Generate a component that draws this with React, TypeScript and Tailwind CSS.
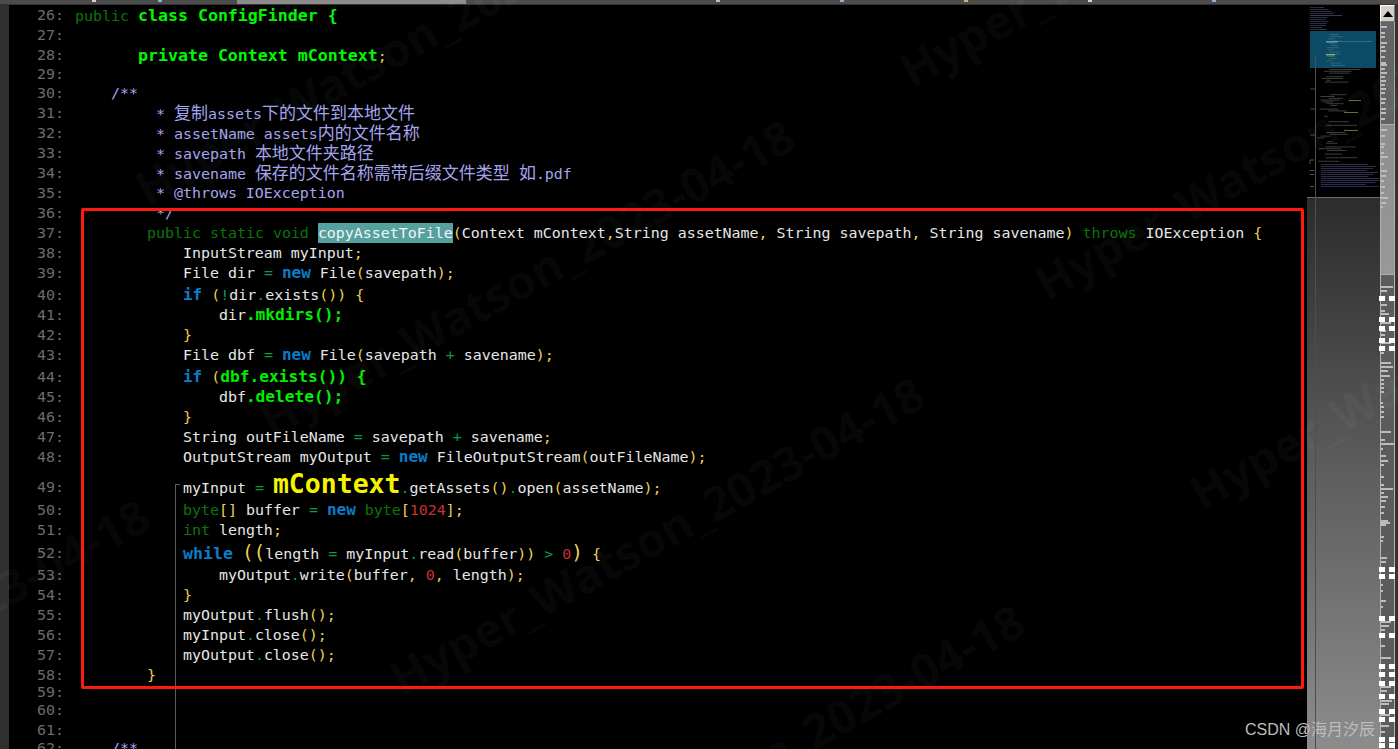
import React from "react";

const MONO = "font-['DejaVu_Sans_Mono','Liberation_Mono',monospace]";

const S: Record<string, string> = {
  t: "text-[#e6e6e6]",
  k: "text-[#0a760a]",
  g: "text-[#00f800] font-bold text-[16.6px]",
  m: "text-[#00ee00] font-bold text-[16.2px]",
  b: "text-[#0a7cc8] font-bold text-[16px]",
  w: "text-[#0a7cc8] font-bold text-[16.6px]",
  o: "text-[#0a9a4a]",
  y: "text-[#f0d050]",
  Y: "text-[#f0d050] text-[19.5px]",
  c: "text-[#a4a4ee]",
  z: "text-[#a4a4ee] text-[17px] font-['Noto_Sans_CJK_SC',sans-serif]",
  n: "text-[#c83030]",
  h: "inline-block h-[20px] bg-[#56a0a0] text-[#eef6f6]",
  M: "text-[#f4f400] font-bold text-[26.5px]",
};

type Tok = [string, string];

const KW = new Set(["public", "static", "void", "throws", "byte", "int"]);
const BL = new Set(["new", "if", "while"]);

function auto(src: string): Tok[] {
  const parts = src.match(/[A-Za-z_]+|\d+|\s+|./g) ?? [];
  return parts.map((p): Tok => {
    if (KW.has(p)) return [p, "k"];
    if (BL.has(p)) return [p, "b"];
    if (/^\d+$/.test(p)) return [p, "n"];
    if ("()[]{};,".includes(p)) return [p, "y"];
    if (".=+!>".includes(p)) return [p, "o"];
    return [p, "t"];
  });
}

const sp = (n: number) => " ".repeat(n);

const ROWS: { n: number; h: string; code?: string; toks: Tok[] }[] = [
  { n: 26, h: "h-[20px]", code: "mt-[1px]", toks: [["public ", "k"], ["class ConfigFinder {", "g"]] },
  { n: 27, h: "h-[20px]", toks: [] },
  { n: 28, h: "h-[19px]", code: "mt-[1px]", toks: [[sp(7), "t"], ["private Context mContext", "g"], [";", "y"]] },
  { n: 29, h: "h-[19px]", toks: [] },
  { n: 30, h: "h-[20px]", toks: [[sp(4) + "/**", "c"]] },
  { n: 31, h: "h-[20px]", code: "-mt-[1px]", toks: [[sp(9) + "* ", "c"], ["复制", "z"], ["assets", "c"], ["下的文件到本地文件", "z"]] },
  { n: 32, h: "h-[20px]", code: "-mt-[1px]", toks: [[sp(9) + "* assetName assets", "c"], ["内的文件名称", "z"]] },
  { n: 33, h: "h-[20px]", code: "-mt-[1px]", toks: [[sp(9) + "* savepath ", "c"], ["本地文件夹路径", "z"]] },
  { n: 34, h: "h-[20px]", code: "-mt-[1px]", toks: [[sp(9) + "* savename ", "c"], ["保存的文件名称需带后缀文件类型", "z"], [" ", "c"], ["如", "z"], [".pdf", "c"]] },
  { n: 35, h: "h-[20px]", toks: [[sp(9) + "* @throws IOException", "c"]] },
  { n: 36, h: "h-[20px]", toks: [[sp(9) + "*/", "c"]] },
  {
    n: 37,
    h: "h-[20px]",
    toks: [
      [sp(8), "t"],
      ...auto("public static void "),
      ["copyAssetToFile", "h"],
      ...auto("(Context mContext,String assetName, String savepath, String savename) throws IOException {"),
    ],
  },
  { n: 38, h: "h-[20px]", toks: auto(sp(12) + "InputStream myInput;") },
  { n: 39, h: "h-[22px]", toks: auto(sp(12) + "File dir = new File(savepath);") },
  { n: 40, h: "h-[20px]", toks: auto(sp(12) + "if (!dir.exists()) {") },
  { n: 41, h: "h-[20px]", toks: [[sp(16) + "dir", "t"], [".mkdirs();", "m"]] },
  { n: 42, h: "h-[20px]", toks: auto(sp(12) + "}") },
  { n: 43, h: "h-[22px]", toks: auto(sp(12) + "File dbf = new File(savepath + savename);") },
  { n: 44, h: "h-[20px]", toks: [[sp(12), "t"], ["if", "b"], [" ", "t"], ["(", "y"], ["dbf.exists()) {", "m"]] },
  { n: 45, h: "h-[20px]", toks: [[sp(16) + "dbf", "t"], [".delete();", "m"]] },
  { n: 46, h: "h-[20px]", toks: auto(sp(12) + "}") },
  { n: 47, h: "h-[20px]", toks: auto(sp(12) + "String outFileName = savepath + savename;") },
  { n: 48, h: "h-[30px]", toks: auto(sp(12) + "OutputStream myOutput = new FileOutputStream(outFileName);") },
  {
    n: 49,
    h: "h-[23px]",
    code: "-mt-[3px]",
    toks: [...auto(sp(12) + "myInput = "), ["mContext", "M"], ...auto(".getAssets().open(assetName);")],
  },
  { n: 50, h: "h-[20px]", toks: auto(sp(12) + "byte[] buffer = new byte[1024];") },
  { n: 51, h: "h-[23px]", toks: auto(sp(12) + "int length;") },
  {
    n: 52,
    h: "h-[22px]",
    toks: [
      [sp(12), "t"],
      ["while", "w"],
      [" ", "t"],
      ["((", "Y"],
      ...auto("length = myInput.read(buffer)) > 0"),
      [")", "Y"],
      ...auto(" {"),
    ],
  },
  { n: 53, h: "h-[20px]", toks: auto(sp(16) + "myOutput.write(buffer, 0, length);") },
  { n: 54, h: "h-[20px]", toks: auto(sp(12) + "}") },
  { n: 55, h: "h-[20px]", toks: auto(sp(12) + "myOutput.flush();") },
  { n: 56, h: "h-[20px]", toks: auto(sp(12) + "myInput.close();") },
  { n: 57, h: "h-[20px]", toks: auto(sp(12) + "myOutput.close();") },
  { n: 58, h: "h-[17px]", toks: auto(sp(8) + "}") },
  { n: 59, h: "h-[18px]", toks: [] },
  { n: 60, h: "h-[20px]", toks: [] },
  { n: 61, h: "h-[18px]", toks: [] },
  { n: 62, h: "h-[20px]", toks: [[sp(4) + "/**", "c"]] },
];

function Row({ n, h, code, toks }: { n: number; h: string; code?: string; toks: Tok[] }) {
  return (
    <div className={`flex ${h}`}>
      <div className="w-[66px] shrink-0 pl-[28px] text-[#6c6c6c] leading-[20px]">{n}:</div>
      <div className={`whitespace-pre leading-[20px] ${code ?? ""}`}>
        {toks.map(([text, kind], i) => (
          <span key={i} className={S[kind]}>
            {text}
          </span>
        ))}
      </div>
    </div>
  );
}

const WM = [
  "left-[915px] top-[47px]",
  "left-[1050px] top-[260px]",
  "left-[1205px] top-[470px]",
  "left-[405px] top-[655px]",
  "left-[275px] top-[397px]",
  "left-[150px] top-[165px]",
  "left-[-370px] top-[777px]",
  "left-[505px] top-[882px]",
];

function rnd(i: number) {
  const x = Math.sin(i * 12.9898) * 43758.5453;
  return x - Math.floor(x);
}

function Minimap() {
  const r: React.ReactNode[] = [];
  for (let y = 7; y < 30; y += 2) {
    r.push(<rect key={`a${y}`} x={3} y={y} width={9} height={1} fill="#2a2a40" />);
    r.push(<rect key={`b${y}`} x={12} y={y} width={3 + rnd(y) * 12} height={1} fill="#2e2e48" />);
  }
  r.push(<rect key="wide" x={3} y={15} width={32} height={1} fill="#3a3a4c" />);
  for (let y = 34; y < 66; y += 2.2) {
    const i = y * 7;
    r.push(<rect key={`c${y}`} x={19 + rnd(i) * 6} y={y} width={5 + rnd(i + 1) * 10} height={1} fill="#3f7488" opacity={0.7} />);
  }
  r.push(<rect key="cy" x={19} y={41} width={12} height={1.4} fill="#6fc7d2" />);
  r.push(<rect key="cy2" x={19} y={41} width={46} height={0.6} fill="#4a8298" />);
  r.push(<rect key="gy" x={19} y={54} width={9} height={1.4} fill="#90b840" />);
  for (let y = 69; y < 162; y += 1.8) {
    const i = y * 3;
    if (rnd(i + 5) < 0.35) continue;
    r.push(<rect key={`d${y}`} x={10 + rnd(i) * 14} y={y} width={4 + rnd(i + 1) * 28} height={1} fill="#3a3f3a" />);
  }
  [[37, 112, 14], [37, 130, 14], [42, 100, 12]].forEach(([x, y, w], i) =>
    r.push(<rect key={`e${i}`} x={x} y={y} width={w} height={1} fill="#6a6a40" />),
  );
  for (let y = 164; y < 188; y += 2) {
    r.push(<rect key={`f${y}`} x={14} y={y} width={45 + rnd(y) * 14} height={1} fill={rnd(y + 3) < 0.3 ? "#28285c" : "#2e2e4c"} />);
  }
  r.push(<path key="br" d="M8.5 89V135M3.5 89H8.5M3.5 109H8.5M3.5 135H8.5" stroke="#4c4c4c" fill="none" />);
  r.push(<path key="br2" d="M3 160h4M3 160v4" stroke="#555" fill="none" />);
  [[3, 170, 4], [3, 174, 4], [3, 186, 4]].forEach(([x, y, w], i) =>
    r.push(<rect key={`g${i}`} x={x} y={y} width={w} height={1} fill="#555" />),
  );
  return (
    <svg className="absolute left-0 top-0" width="73" height="197" viewBox="0 0 73 197">
      {r}
    </svg>
  );
}

const BLOCKS = [296, 317, 326, 338, 346, 567, 574, 616, 633, 664, 672, 681, 694, 709, 717, 737, 743];
const MARKS: [number, number][] = [
  [26, 6], [32, 4], [36, 4], [42, 6], [46, 4], [50, 5], [56, 4], [62, 5], [64, 6], [68, 4], [72, 6], [76, 4], [80, 5],
  [84, 4], [88, 5], [92, 4], [98, 5], [102, 4], [108, 5], [112, 5], [118, 4],
  [129, 6], [135, 4], [143, 4], [146, 3], [152, 3], [156, 7], [163, 3], [170, 6], [175, 5], [180, 3], [186, 4], [192, 3],
  [197, 7], [202, 5], [206, 2],
  [286, 12], [290, 6], [304, 6], [310, 4], [313, 8], [322, 10], [330, 5], [334, 4], [342, 10], [352, 3],
  [362, 10], [366, 12], [370, 7], [375, 9], [379, 3], [383, 3], [387, 3], [391, 3], [402, 2], [406, 3], [411, 3], [416, 3],
  [431, 10], [439, 4], [443, 13], [448, 2], [455, 5], [460, 7], [464, 3], [476, 3], [484, 3], [488, 12], [492, 3], [496, 7],
  [500, 5], [506, 4], [512, 3], [520, 7], [524, 5], [536, 3], [540, 2], [557, 6], [561, 5],
  [522, 9], [584, 2], [590, 2], [600, 5], [606, 2], [621, 10], [625, 8], [629, 4], [645, 4], [657, 10],
  [686, 10], [690, 6], [700, 11], [703, 8], [714, 9], [725, 8], [731, 4],
];

function ScrollMarks() {
  return (
    <svg className="absolute left-[-1px] top-0" width="17" height="749" viewBox="0 0 17 749">
      {MARKS.map(([y, w], i) => (
        <rect key={i} x={2} y={y} width={w} height={2} fill="#bcbcbc" />
      ))}
      {BLOCKS.map((y, i) => (
        <g key={i} fill="#ffffff">
          <rect x={0} y={y} width={6} height={5} />
          <rect x={10} y={y} width={6} height={5} />
        </g>
      ))}
    </svg>
  );
}

export default function App() {
  return (
    <div className="relative flex h-[749px] w-[1398px] flex-col overflow-hidden bg-black">
      {/* top window strip */}
      <div className="flex h-[5px] shrink-0 border-b border-[#333] bg-[#4c4c4c]">
        <div className="ml-[92px] flex h-full items-start gap-[62px]">
          <div className="h-[2px] w-[4px] bg-[#d0d0d0]" />
          <div className="h-[2px] w-[4px] bg-[#8ab0d8]" />
        </div>
        <div className="ml-[75px] h-full w-[229px] bg-[#8c8c8c]" />
        <div className="ml-[250px] flex h-full items-start gap-[120px]">
          <div className="h-[2px] w-[4px] bg-[#b9b9d8]" />
          <div className="h-[2px] w-[4px] bg-[#8ab0d8]" />
          <div className="h-[2px] w-[4px] bg-[#d8a878]" />
          <div className="h-[2px] w-[4px] bg-[#d0d0d0]" />
          <div className="h-[2px] w-[4px] bg-[#8ab0d8]" />
        </div>
      </div>

      <div className="flex min-h-0 flex-1">
        <div className="w-[9px] shrink-0 bg-[#303030]" />

        {/* code */}
        <div className={`relative min-w-0 flex-1 overflow-hidden text-[14.95px] ${MONO}`}>
          {ROWS.map((r) => (
            <Row key={r.n} {...r} />
          ))}
          {/* fold guide */}
          <div className="absolute left-[166px] top-[479px] h-[300px] w-[5px] border-l border-t border-[#5c5c5c]" />
        </div>

        {/* minimap */}
        <div className="relative flex w-[73px] shrink-0 flex-col">
          <div className="relative h-[192px] shrink-0 bg-black">
            <div className="absolute left-[3px] top-[26px] h-[37px] w-[66px] bg-[#0c4a66]" />
            <div className="absolute inset-x-0 -top-[5px]">
              <Minimap />
            </div>
          </div>
          <div className="flex-1 border-t border-[#6a6a6a] bg-gradient-to-b from-[#2c2c2c] via-[#5e5e5e] to-[#8c8c8c]" />
          <div className="absolute bottom-0 left-[8px] top-[50px] w-px bg-[#4e4e4e]" />
        </div>

        {/* scrollbar */}
        <div className="relative flex w-[15px] shrink-0 flex-col bg-[#5c5c5c]">
          <div className="flex h-[17px] shrink-0 items-center justify-center border border-b-[#777] border-l-white border-r-[#777] border-t-white bg-[#d4d0c8]">
            <div className="h-0 w-0 border-x-[5px] border-b-[6px] border-x-transparent border-b-black" />
          </div>
          <div className="h-[102px] shrink-0 border-x border-[#a8a8a8] bg-[#646464]" />
          <div className="h-[151px] shrink-0 border border-[#b0b0b0] bg-gradient-to-b from-[#8e8e8e] to-[#989898]" />
          <div className="flex-1 border-x border-[#b4b4b4] bg-[#5c5c5c]" />
          <div className="absolute inset-0 -top-[5px]">
            <ScrollMarks />
          </div>
        </div>
        <div className="w-[3px] shrink-0 bg-[#333]" />
      </div>

      {/* page watermark */}
      {WM.map((pos, i) => (
        <span
          key={i}
          className={`pointer-events-none absolute ${pos} origin-bottom-left -rotate-[29deg] whitespace-nowrap font-['Noto_Sans',sans-serif] text-[47px] leading-[47px] font-bold text-white/[0.045]`}
        >
          Hyper_Watson_2023-04-18
        </span>
      ))}

      {/* red annotation box */}
      <div className="pointer-events-none absolute left-[81px] top-[208px] h-[481px] w-[1223px] rounded-[2px] border-[3px] border-[#ff1a10]" />

      {/* CSDN stamp */}
      <span className="pointer-events-none absolute bottom-[9px] left-[1245px] whitespace-nowrap font-['Liberation_Sans','Noto_Sans_CJK_SC',sans-serif] text-[16px] leading-[20px] text-[#bdbdbd]">
        CSDN @海月汐辰
      </span>
    </div>
  );
}
